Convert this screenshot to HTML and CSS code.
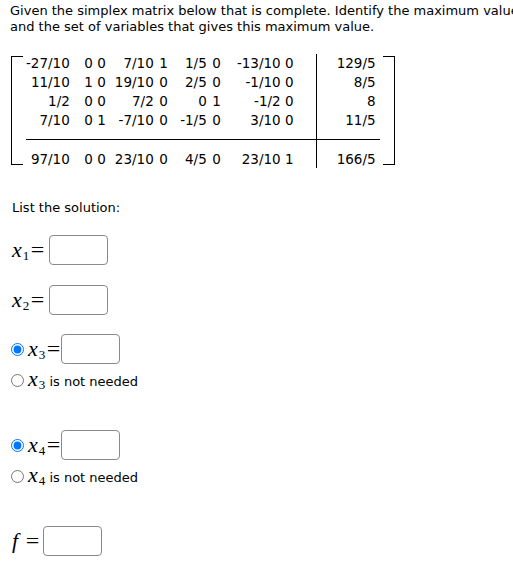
FILE: index.html
```html
<!DOCTYPE html>
<html>
<head>
<meta charset="utf-8">
<link rel="stylesheet" href="styles.css">
</head>
<body>
<div class="page">
  <p class="prompt">Given the simplex matrix below that is complete. Identify the maximum value<br>and the set of variables that gives this maximum value.</p>

  <div class="matrix">
    <div class="bracket bracket-left"></div>
    <table class="tableau">
      <tr><td>-27/10</td><td>0</td><td>0</td><td>7/10</td><td>1</td><td>1/5</td><td>0</td><td>-13/10</td><td>0</td><td class="rhs">129/5</td></tr>
      <tr><td>11/10</td><td>1</td><td>0</td><td>19/10</td><td>0</td><td>2/5</td><td>0</td><td>-1/10</td><td>0</td><td class="rhs">8/5</td></tr>
      <tr><td>1/2</td><td>0</td><td>0</td><td>7/2</td><td>0</td><td>0</td><td>1</td><td>-1/2</td><td>0</td><td class="rhs">8</td></tr>
      <tr class="last-constraint"><td>7/10</td><td>0</td><td>1</td><td>-7/10</td><td>0</td><td>-1/5</td><td>0</td><td>3/10</td><td>0</td><td class="rhs">11/5</td></tr>
      <tr class="objective"><td>97/10</td><td>0</td><td>0</td><td>23/10</td><td>0</td><td>4/5</td><td>0</td><td>23/10</td><td>1</td><td class="rhs">166/5</td></tr>
    </table>
    <div class="bracket bracket-right"></div>
  </div>

  <p class="list-label">List the solution:</p>

  <div class="answer-row row-x1">
    <span class="math"><span class="mi">x</span><sub class="sub">1</sub><span class="eq">=</span></span>
    <input type="text" class="answer">
  </div>

  <div class="answer-row row-x2">
    <span class="math"><span class="mi">x</span><sub class="sub">2</sub><span class="eq">=</span></span>
    <input type="text" class="answer">
  </div>

  <div class="choice-group group-x3">
    <label class="choice choice-value">
      <input type="radio" name="x3" class="radio" checked>
      <span class="math"><span class="mi">x</span><sub class="sub">3</sub><span class="eq tight">=</span></span><input type="text" class="answer">
    </label>
    <label class="choice choice-skip">
      <input type="radio" name="x3" class="radio">
      <span class="skip-label"><span class="math small"><span class="mi">x</span><sub class="sub">3</sub></span> is not needed</span>
    </label>
  </div>

  <div class="choice-group group-x4">
    <label class="choice choice-value">
      <input type="radio" name="x4" class="radio" checked>
      <span class="math"><span class="mi">x</span><sub class="sub">4</sub><span class="eq tight">=</span></span><input type="text" class="answer">
    </label>
    <label class="choice choice-skip">
      <input type="radio" name="x4" class="radio">
      <span class="skip-label"><span class="math small"><span class="mi">x</span><sub class="sub">4</sub></span> is not needed</span>
    </label>
  </div>

  <div class="answer-row row-f">
    <span class="math"><span class="mi">f</span><span class="eq eq-f">=</span></span>
    <input type="text" class="answer">
  </div>
</div>
</body>
</html>
```

FILE: styles.css
```css
html, body {
  margin: 0;
  padding: 0;
  overflow: hidden;
  background: #fff;
}

.page {
  width: 560px;
  padding: 3px 10px 0 10px;
  font-family: "DejaVu Sans", Verdana, sans-serif;
  font-size: 13px;
  line-height: 16px;
  color: #000;
}

.prompt {
  margin: 0;
  white-space: nowrap;
}

/* ---------- matrix ---------- */
.matrix {
  display: flex;
  width: max-content;
  margin: 19px 0 0 1px;
}

.bracket {
  width: 11px;
  border: 1px solid #000;
  margin: 2px 0 3px 0;
}

.bracket-left { border-right: none; }
.bracket-right { border-left: none; }

.tableau {
  border-collapse: collapse;
  margin: 0 3px;
  font-size: 13.5px;
}

.tableau td {
  text-align: right;
  padding: 0;
  line-height: 19px;
  white-space: nowrap;
}

.tableau td:nth-child(1) { padding-left: 0; }
.tableau td:nth-child(2) { padding-left: 14.4px; }
.tableau td:nth-child(3) { padding-left: 4.4px; }
.tableau td:nth-child(4) { padding-left: 9.1px; }
.tableau td:nth-child(5) { padding-left: 5.4px; }
.tableau td:nth-child(6) { padding-left: 12.4px; }
.tableau td:nth-child(7) { padding-left: 5.4px; }
.tableau td:nth-child(8) { padding-left: 16.2px; }
.tableau td:nth-child(9) { padding-left: 4.4px; padding-right: 22px; }

.tableau td.rhs {
  border-left: 1px solid #000;
  padding-left: 20px;
  padding-right: 4px;
}

.tableau tr.last-constraint td {
  border-bottom: 1px solid #000;
  padding-bottom: 9px;
}

.tableau tr.objective td {
  padding-top: 11px;
  line-height: 17px;
}

/* ---------- answers ---------- */
.list-label {
  margin: 32px 0 0 2px;
}

.math {
  font-family: "Liberation Serif", "DejaVu Serif", serif;
  font-size: 22px;
  line-height: 20px;
  white-space: nowrap;
}

.mi {
  font-style: italic;
}

.sub {
  font-size: 13px;
  vertical-align: -3px;
  line-height: 0;
  margin-left: 1px;
}

.eq {
  display: inline-block;
  font-size: 20px;
  margin: 0 5px 0 3px;
  transform: scaleX(1.2);
}

.eq.tight { margin: 0 1px 0 3px; }
.eq-f { margin-left: 9px; }

.answer-row {
  display: flex;
  align-items: center;
  height: 30px;
  margin-left: 2px;
}

.row-x1 { margin-top: 19px; }
.row-x2 { margin-top: 20px; }
.row-f { margin-top: 42px; }

.answer {
  box-sizing: border-box;
  width: 59px;
  height: 30px;
  margin: 0;
  border: 1px solid #8a8a8a;
  border-radius: 4px;
  padding: 0 4px;
  background: #fff;
  font: inherit;
}

.choice-group {
  display: flex;
  flex-direction: column;
}

.group-x3 { margin-top: 19px; }
.group-x4 { margin-top: 42px; }

.choice {
  display: flex;
  align-items: center;
  white-space: nowrap;
}

.choice-value { height: 30px; }

.choice-skip {
  height: 16px;
  margin-top: 8px;
}

.skip-label {
  line-height: 16px;
}

.math.small { line-height: 16px; }

.radio {
  width: 13px;
  height: 13px;
  margin: 0 4px 0 1px;
}
```
